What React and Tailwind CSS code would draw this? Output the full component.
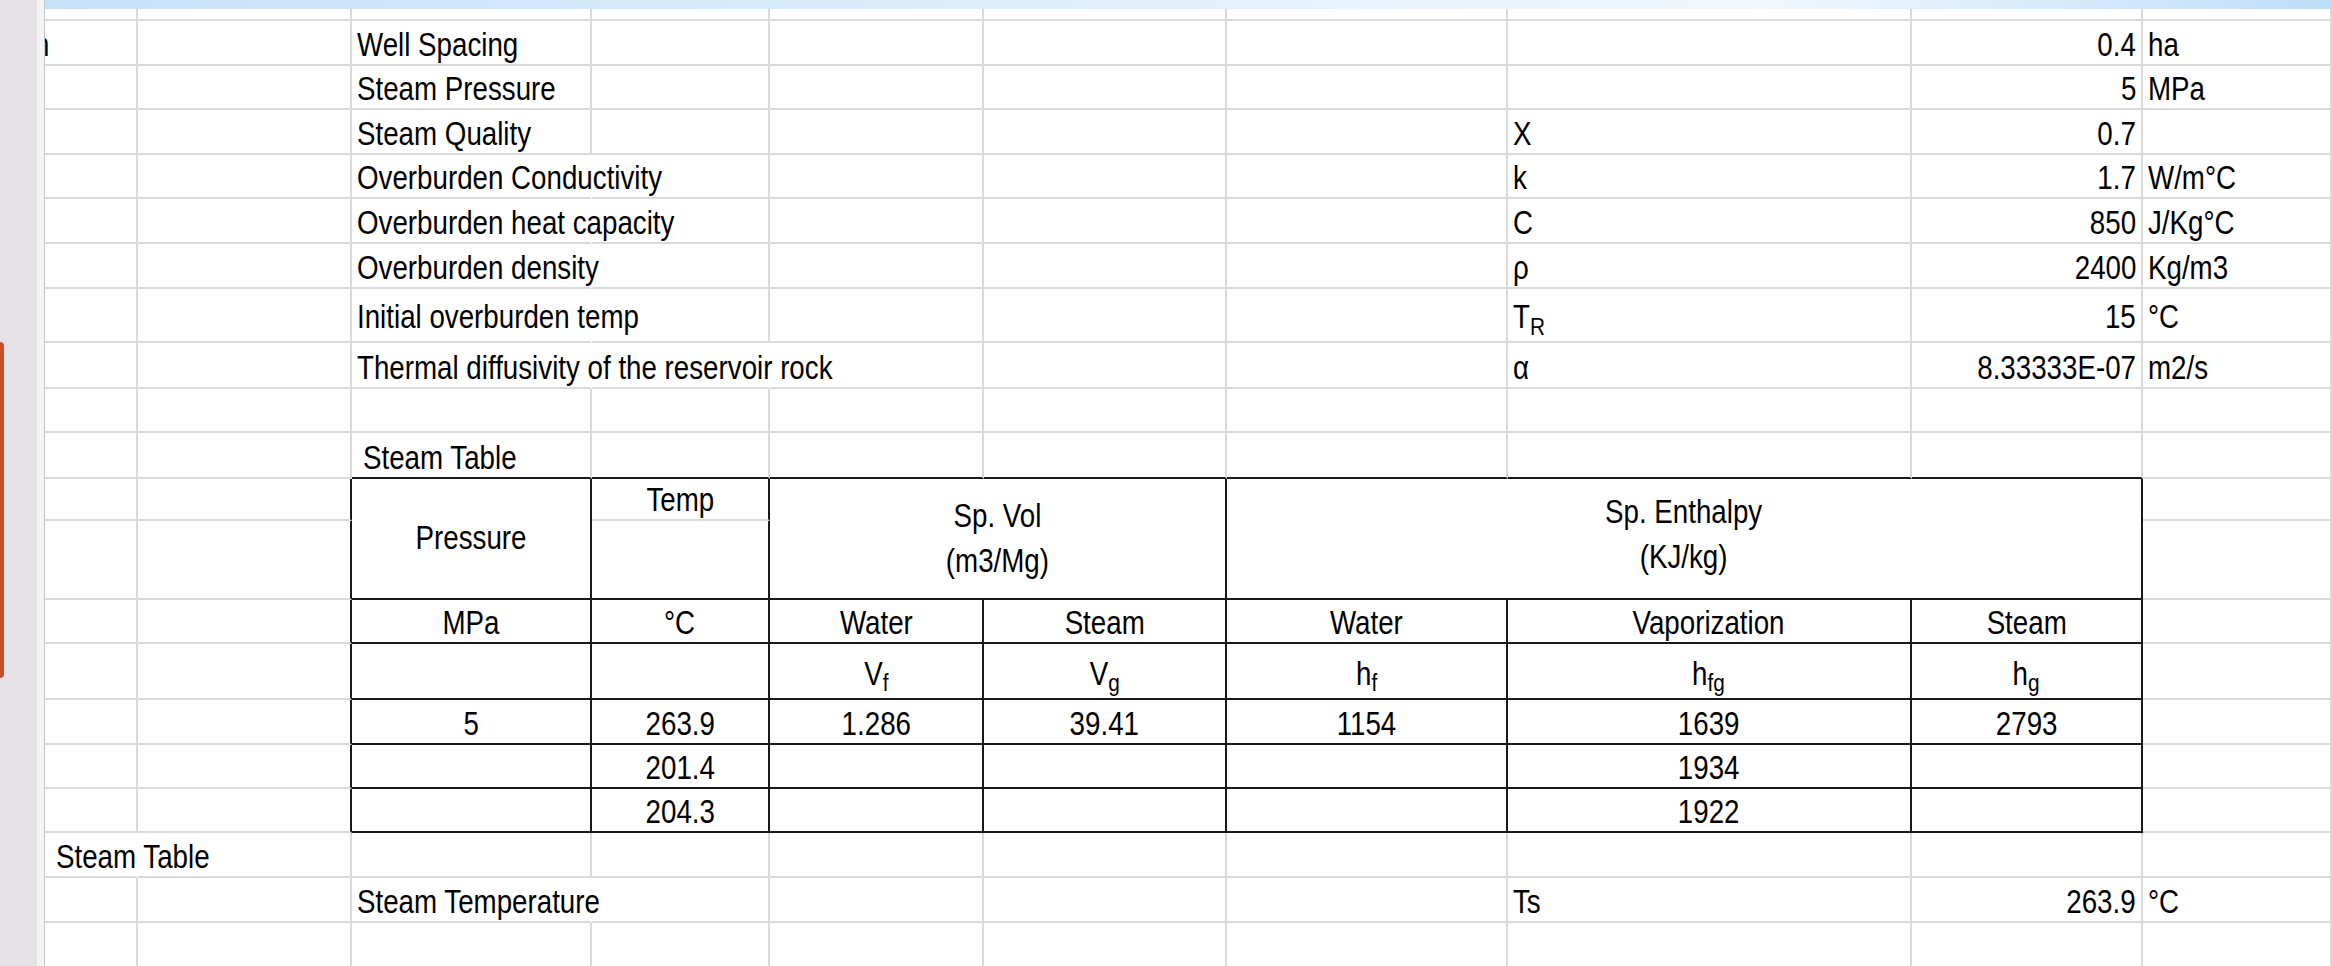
import React from 'react';

// gridline / table border styles, written out in full so Tailwind picks them up
const rightBorder = {
  g: 'border-r-2 border-r-[#dadada]',
  k: 'border-r-2 border-r-[#1a1a1a]',
  n: 'border-r-2 border-r-transparent',
};
const bottomBorder = {
  g: 'border-b-2 border-b-[#dadada]',
  k: 'border-b-2 border-b-[#1a1a1a]',
  n: '',
};
const alignCls = {
  l: 'justify-start pl-[5px]',
  l2: 'justify-start pl-[11px]',
  r: 'justify-end pr-[5px]',
  c: 'justify-center',
};
const originCls = { l: 'origin-left', l2: 'origin-left', r: 'origin-right', c: 'origin-center' };

const Cell = ({ t, a = 'l', r = 'g', b = 'g', v = 'end', span = '', pad = '', tc = 'leading-[38px]', tail }) => {
  if (tail) {
    // cut-off end of a label from the column left of the visible area
    return (
      <div className={`flex items-end overflow-hidden ${rightBorder[r]} ${bottomBorder[b]}`}>
        <span className="-ml-[11px] inline-block shrink-0 whitespace-nowrap leading-[38px] scale-x-[0.84] origin-left">n</span>
      </div>
    );
  }
  return (
    <div className={`flex min-w-0 ${v === 'end' ? 'items-end' : 'items-center'} ${alignCls[a]} ${rightBorder[r]} ${bottomBorder[b]} ${span} ${pad}`}>
      {t != null && (
        <span className={`inline-block shrink-0 whitespace-nowrap text-center scale-x-[0.84] ${originCls[a]} ${tc}`}>{t}</span>
      )}
    </div>
  );
};

const X = {};
const blank = (n, c = X) => Array.from({ length: n }, () => c);
const P = { pad: 'pb-[5px]' };
const K = { r: 'k' };
const T = (t) => ({ t, a: 'c', r: 'k', b: 'k' });
const TP = (t) => ({ t, a: 'c', r: 'k', b: 'k', pad: 'pb-[5px]' });

const sheet = [
  // R0 (partly scrolled off)
  ...blank(10),
  // R1..R8 input parameters
  [{ tail: true }, X, { t: 'Well Spacing' }, X, X, X, X, X, { t: '0.4', a: 'r' }, { t: 'ha' }],
  [X, X, { t: 'Steam Pressure' }, X, X, X, X, X, { t: '5', a: 'r' }, { t: 'MPa' }],
  [X, X, { t: 'Steam Quality' }, X, X, X, X, { t: 'X' }, { t: '0.7', a: 'r' }, X],
  [X, X, { t: 'Overburden Conductivity', r: 'n' }, X, X, X, X, { t: 'k' }, { t: '1.7', a: 'r' }, { t: 'W/m°C' }],
  [X, X, { t: 'Overburden heat capacity', r: 'n' }, X, X, X, X, { t: 'C' }, { t: '850', a: 'r' }, { t: 'J/Kg°C' }],
  [X, X, { t: 'Overburden density', r: 'n' }, X, X, X, X, { t: 'ρ' }, { t: '2400', a: 'r' }, { t: 'Kg/m3' }],
  [P, P, { t: 'Initial overburden temp', r: 'n', ...P }, P, P, P, P, { t: <>T<sub>R</sub></>, ...P }, { t: '15', a: 'r', ...P }, { t: '°C', ...P }],
  [X, X, { t: 'Thermal diffusivity of the reservoir rock', r: 'n' }, { r: 'n' }, X, X, X, { t: 'α' }, { t: '8.33333E-07', a: 'r' }, { t: 'm2/s' }],
  // R9 blank
  ...blank(10),
  // R10 table caption
  [X, X, { t: 'Steam Table', a: 'l2', b: 'k' }, { b: 'k' }, { b: 'k' }, { b: 'k' }, { b: 'k' }, { b: 'k' }, { b: 'k' }, X],
  // R11/R12 merged header
  [
    X, K,
    { t: 'Pressure', a: 'c', v: 'c', r: 'k', b: 'k', span: 'row-span-2' },
    { t: 'Temp', a: 'c', r: 'k' },
    {
      t: <><span className="block">Sp. Vol</span><span className="block">(m3/Mg)</span></>,
      a: 'c', v: 'c', r: 'k', b: 'k', span: 'col-span-2 row-span-2', tc: 'leading-[45px]',
    },
    {
      t: <><span className="block">Sp. Enthalpy</span><span className="block">(KJ/kg)</span></>,
      a: 'c', v: 'c', r: 'k', b: 'k', span: 'col-span-3 row-span-2', tc: 'leading-[45px] -translate-y-[4px]',
    },
    X,
  ],
  [X, K, { r: 'k', b: 'k' }, X],
  // R13 units / phase
  [X, K, T('MPa'), T('°C'), T('Water'), T('Steam'), T('Water'), T('Vaporization'), T('Steam'), X],
  // R14 symbols
  [P, { r: 'k', ...P }, TP(null), TP(null), TP(<>V<sub>f</sub></>), TP(<>V<sub>g</sub></>), TP(<>h<sub>f</sub></>), TP(<>h<sub>fg</sub></>), TP(<>h<sub>g</sub></>), P],
  // R15..R17 data
  [X, K, T('5'), T('263.9'), T('1.286'), T('39.41'), T('1154'), T('1639'), T('2793'), X],
  [X, K, T(null), T('201.4'), T(null), T(null), T(null), T('1934'), T(null), X],
  [X, K, T(null), T('204.3'), T(null), T(null), T(null), T('1922'), T(null), X],
  // R18..R20
  [{ t: 'Steam Table', a: 'l2', r: 'n' }, X, X, X, X, X, X, X, X, X],
  [X, X, { t: 'Steam Temperature', r: 'n' }, X, X, X, X, { t: 'Ts' }, { t: '263.9', a: 'r' }, { t: '°C' }],
  ...blank(10, { b: 'n' }),
].flat();

const App = () => {
  return (
    <div className="flex h-[966px] w-full overflow-hidden bg-white font-['Liberation_Sans',Arial,sans-serif] text-[33px] text-black">
      {/* left rail */}
      <div className="flex w-[45px] shrink-0">
        <div className="w-[37px] bg-[#e6e1e7]">
          <div className="mt-[342px] h-[336px] w-[4px] rounded-r-[4px] bg-[#c24f2e]" />
        </div>
        <div className="w-[7px] bg-[#f5f5f5]" />
        <div className="w-px bg-[#c6c6c6]" />
      </div>

      <div className="flex min-w-0 flex-1 flex-col">
        <div className="h-[9px] shrink-0 bg-linear-to-r from-[#c5e1f8] via-[#f1f8fe] via-75% to-[#bcdef8]" />
        <div className="grid flex-1 grid-cols-[93px_214px_240px_178px_214px_243px_281px_404px_231px_1fr] grid-rows-[12px_44.6px_44.6px_44.6px_44.6px_45px_44.4px_54.6px_45.4px_44.7px_45.4px_42px_79.3px_44px_56px_44.7px_44.6px_44px_44.7px_45.3px_1fr]">
          {sheet.map((c, i) => (
            <Cell key={i} {...c} />
          ))}
        </div>
      </div>
    </div>
  );
};

export default App;
